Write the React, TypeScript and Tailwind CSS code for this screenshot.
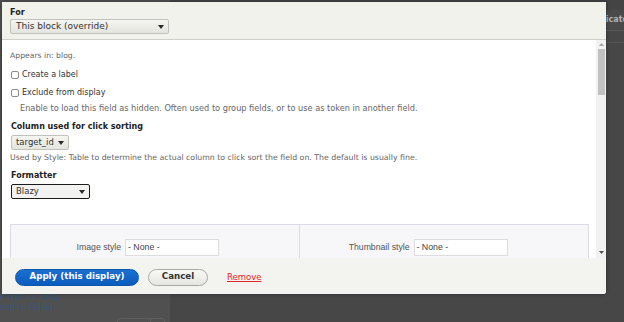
import clsx from 'clsx';

const sans = "font-['DejaVu_Sans',sans-serif]";
const arial = "font-['Liberation_Sans',Arial,sans-serif]";

function Caret() {
    return (
        <svg width="6" height="4" viewBox="0 0 6 4" className="shrink-0">
            <path d="M0 0h6L3 4z" fill="#2a2a2a" />
        </svg>
    );
}

type DropdownProps = {
    value: string;
    className?: string;
    focused?: boolean;
};

function Dropdown({ value, className, focused }: DropdownProps) {
    return (
        <div
            className={clsx(
                'flex h-[15px] items-center justify-between rounded-[2px] border pl-[4px] pr-[4px] leading-none text-[#333]',
                focused
                    ? 'border-[#1c1c1c] bg-[#f2f2f0]'
                    : 'border-[#c2c2bc] bg-linear-to-b from-[#f5f5f1] to-[#e5e5df]',
                className
            )}>
            <span>{value}</span>
            <Caret />
        </div>
    );
}

function Checkbox({ label }: { label: string }) {
    return (
        <div className="flex h-[10px] items-center gap-[3px]">
            <span className="h-[8px] w-[8px] rounded-[2px] border border-[#8c8c8c] bg-white" />
            <span className="text-[8px] text-[#333]">{label}</span>
        </div>
    );
}

function StyleField({ label }: { label: string }) {
    return (
        <div className="flex items-center pt-[14px]">
            <span className={clsx(arial, 'w-[114px] pr-[4px] text-right text-[8.7px] text-[#555]')}>{label}</span>
            <div className={clsx(arial, 'flex h-[17px] w-[94px] items-center border border-[#dddddd] bg-white pl-[2px] text-[8.8px] text-[#444]')}>
                - None -
            </div>
        </div>
    );
}

function Scrollbar() {
    return (
        <div className="flex w-[10px] flex-col items-center bg-[#f1f1f1]">
            <svg width="5" height="3" viewBox="0 0 5 3" className="mt-[3px]">
                <path d="M0 3h5L2.5 0z" fill="#a3a3a3" />
            </svg>
            <div className="mt-[3px] h-[46px] w-[7px] bg-[#c1c1c1]" />
            <div className="flex-1" />
            <svg width="5" height="3" viewBox="0 0 5 3" className="mb-[4px]">
                <path d="M0 0h5L2.5 3z" fill="#505050" />
            </svg>
        </div>
    );
}

export default function App() {
    return (
        <div className={clsx(sans, 'relative h-[322px] w-[624px] overflow-hidden bg-[#474747]')}>
            {/* page behind the dialog */}
            <div className="flex h-full">
                <div className="w-[170px] bg-[#505050] pt-[292px] text-[8px] leading-[10px] text-[#35577e]">
                    <div className="whitespace-nowrap">e type (= blog)</div>
                    <div className="-ml-[3px] mt-[1px] whitespace-nowrap">ered (= False)</div>
                    <div className="ml-[117px] mt-[5px] flex h-[10px] w-[48px] rounded-t-[4px] border border-[#5f5f5f]">
                        <span className="w-[33px] border-r border-[#5f5f5f]" />
                    </div>
                </div>
                <div className="flex-1">
                    <div className="h-[10px] bg-[#444]" />
                    <div className="flex h-[21px] items-center justify-end border-b border-[#595959] bg-[#4a4a4a]">
                        <span className="-mr-[4px] whitespace-nowrap text-[8px] font-bold text-[#b4b4b4]">Duplicate</span>
                    </div>
                    <div className="h-[12px] border-b border-[#555]" />
                </div>
            </div>

            {/* dialog */}
            <div className="absolute left-[2px] top-[2px] flex h-[292px] w-[604px] flex-col overflow-hidden rounded-br-[3px] bg-white shadow-[0_0_4px_rgba(0,0,0,0.35)]">
                <div className="h-[38px] shrink-0 border-b border-[#cfcfcb] bg-[#f1f2ec] px-[8px] pt-[6px]">
                    <div className="h-[10px] text-[8px] font-bold leading-[10px] text-[#222]">For</div>
                    <Dropdown value="This block (override)" className="mt-[1px] w-[159px] pl-[5px] text-[9px]" />
                </div>

                <div className="flex min-h-0 flex-1">
                    <div className="min-w-0 flex-1 overflow-hidden pl-[8px] pr-[7px] pt-[11px]">
                        <div className="h-[10px] text-[7.7px] leading-[10px] text-[#666]">Appears in: blog.</div>
                        <div className="mt-[9px] pl-[1px]">
                            <Checkbox label="Create a label" />
                        </div>
                        <div className="mt-[8px] pl-[1px]">
                            <Checkbox label="Exclude from display" />
                        </div>
                        <div className="mt-[5px] h-[10px] whitespace-nowrap pl-[10px] text-[8.2px] leading-[10px] text-[#666]">
                            Enable to load this field as hidden. Often used to group fields, or to use as token in another field.
                        </div>
                        <div className="mt-[9px] h-[10px] pl-[1px] text-[8px] font-bold leading-[10px] text-[#222]">
                            Column used for click sorting
                        </div>
                        <Dropdown value="target_id" className="ml-[1px] mt-[3px] w-[58px] text-[8.5px]" />
                        <div className="mt-[3px] h-[10px] whitespace-nowrap text-[7.8px] leading-[10px] text-[#666]">
                            Used by Style: Table to determine the actual column to click sort the field on. The default is usually fine.
                        </div>
                        <div className="mt-[8px] h-[10px] pl-[1px] text-[8px] font-bold leading-[10px] text-[#222]">Formatter</div>
                        <Dropdown value="Blazy" focused className="ml-[1px] mt-[3px] w-[79px] text-[8.5px]" />

                        <div className="mt-[25px] grid h-[60px] grid-cols-2 border border-[#dcdce8] bg-[#f7f7f9]">
                            <div className="border-r border-[#dcdce8]">
                                <StyleField label="Image style" />
                            </div>
                            <div>
                                <StyleField label="Thumbnail style" />
                            </div>
                        </div>
                    </div>
                    <Scrollbar />
                </div>

                <div className="flex h-[36px] shrink-0 items-center bg-[#f3f3ef] pl-[13px] pt-[2px]">
                    <button className="h-[17px] w-[124px] rounded-full border border-[#0a57ae] bg-linear-to-b from-[#1a6fd0] to-[#0a5cbd] text-[8.7px] font-bold text-white">
                        Apply (this display)
                    </button>
                    <button className="ml-[9px] h-[17px] w-[60px] rounded-full border border-[#a9a9a4] bg-linear-to-b from-[#f8f8f5] to-[#e6e6e1] text-[8.7px] font-bold text-[#333]">
                        Cancel
                    </button>
                    <a className="ml-[19px] text-[8.5px] text-[#e0262b] underline">Remove</a>
                </div>
            </div>
        </div>
    );
}
